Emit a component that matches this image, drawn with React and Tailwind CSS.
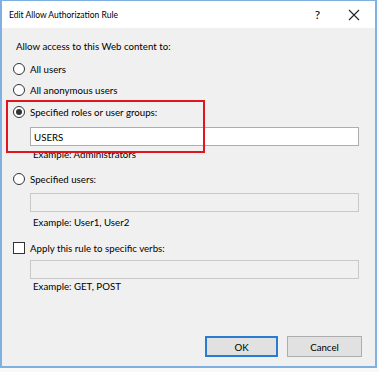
import React from 'react'

const font = { fontFamily: '"Segoe UI", Lato, "Noto Sans", sans-serif' }

function Radio({ checked }) {
  return (
    <span className="flex h-[12px] w-[12px] shrink-0 items-center justify-center rounded-full border border-[#333] bg-white">
      {checked && <span className="h-[6px] w-[6px] rounded-full bg-[#333]" />}
    </span>
  )
}

function Field({ value, disabled }) {
  return (
    <div
      className={`ml-[28px] mr-[16px] flex h-[19px] items-center border px-[3px] text-[#000] ${
        disabled ? 'border-[#c8c8c8] bg-[#f0f0f0]' : 'border-[#adadad] bg-white'
      }`}
    >
      {value}
    </div>
  )
}

export default function App() {
  return (
    <div className="h-[372px] w-[379px] bg-[#f7f9fb] text-[9.7px] leading-[16px] text-[#000]" style={font}>
      <div className="relative flex h-[368px] w-[377px] flex-col border-x-2 border-b-2 border-t border-[#7fb0e0] bg-[#f0f0f0]">
        <div className="flex h-[27px] shrink-0 items-center bg-white pl-[7px] pr-[14px] text-[#000]">
          <span className="flex-1 text-[8.5px]">Edit Allow Authorization Rule</span>
          <span className="mr-[28px] text-[12px]">?</span>
          <svg width="12" height="12" viewBox="0 0 12 12" className="mr-[1px]">
            <path d="M1 1L11 11M11 1L1 11" stroke="#222" strokeWidth="1.1" />
          </svg>
        </div>

        <div className="flex flex-col pl-[10px] pt-[10px]">
          <div className="pl-[4px]">Allow access to this Web content to:</div>

          <div className="mt-[7px] flex h-[16px] items-center gap-[5px] pl-[1px]">
            <Radio />
            <span>All users</span>
          </div>
          <div className="mt-[5px] flex h-[16px] items-center gap-[5px] pl-[1px]">
            <Radio />
            <span>All anonymous users</span>
          </div>
          <div className="mt-[6px] flex h-[16px] items-center gap-[5px] pl-[1px]">
            <Radio checked />
            <span>Specified roles or user groups:</span>
          </div>
        </div>
        <div className="mt-[7px] flex flex-col">
          <Field value="USERS" />
          <div className="pl-[31px]">Example: Administrators</div>
        </div>

        <div className="mt-[9px] flex h-[16px] items-center gap-[5px] pl-[11px]">
          <Radio />
          <span>Specified users:</span>
        </div>
        <div className="mt-[6px] flex flex-col">
          <Field disabled />
          <div className="mt-[2px] pl-[31px]">Example: User1, User2</div>
        </div>

        <div className="mt-[10px] flex h-[16px] items-center gap-[5px] pl-[11px]">
          <span className="h-[12px] w-[12px] shrink-0 border border-[#333] bg-white" />
          <span>Apply this rule to specific verbs:</span>
        </div>
        <div className="mt-[4px] flex flex-col">
          <Field disabled />
          <div className="-mt-[1px] pl-[31px]">Example: GET, POST</div>
        </div>

        <div className="mt-auto mb-[9px] flex justify-end gap-[9px] pr-[13px]">
          <button className="h-[21px] w-[73px] border-2 border-[#2b7bd0] bg-[#e1e1e1] text-[#000]">OK</button>
          <button className="h-[21px] w-[75px] border border-[#adadad] bg-[#e1e1e1] text-[#000]">Cancel</button>
        </div>

        <div className="absolute left-[4px] top-[99px] h-[53px] w-[199px] border-[2.5px] border-[#e0161e]" />
      </div>
    </div>
  )
}
